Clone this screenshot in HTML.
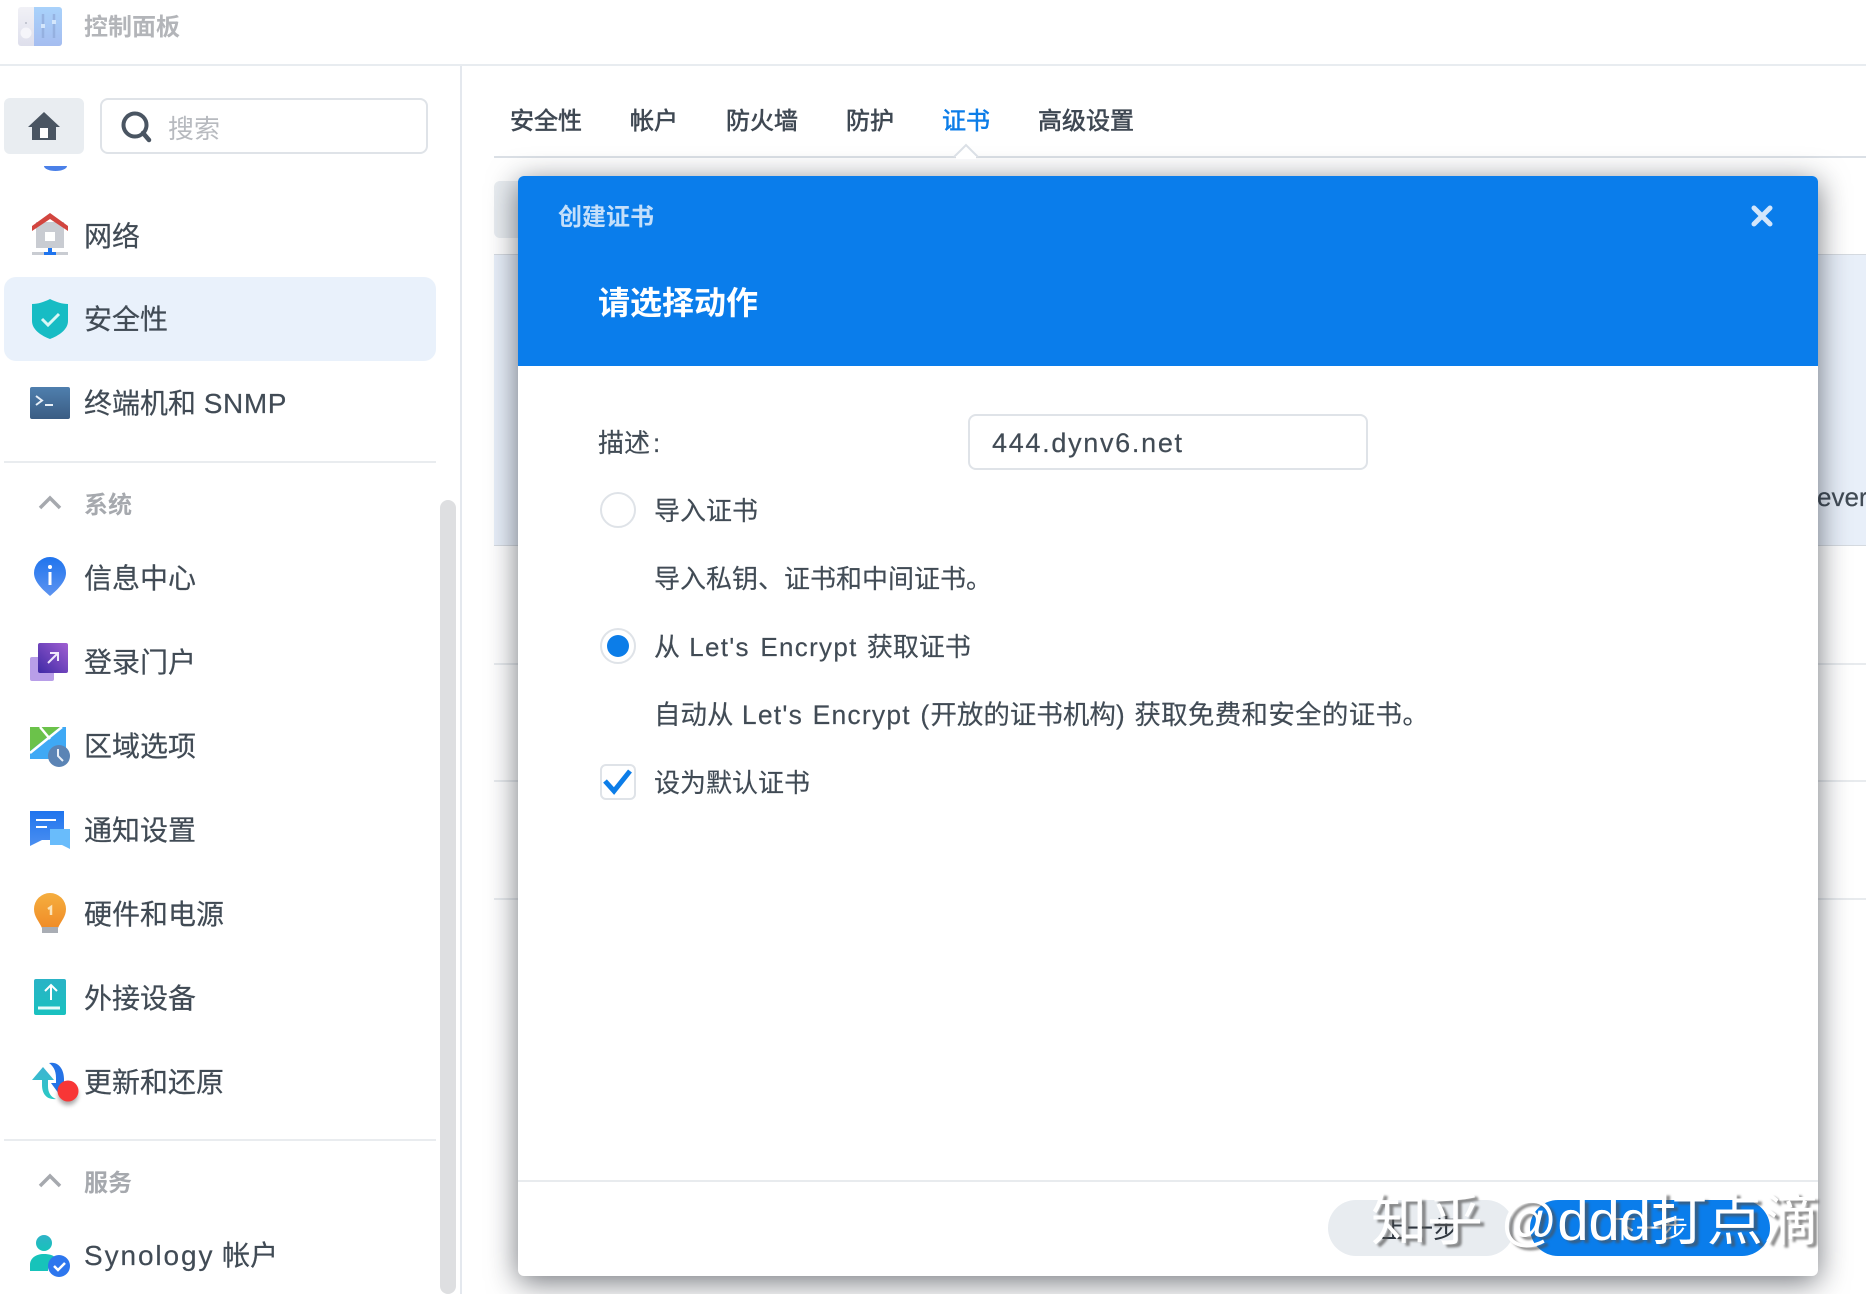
<!DOCTYPE html>
<html lang="zh-CN">
<head>
<meta charset="utf-8">
<title>控制面板</title>
<style>
html,body{margin:0;padding:0;background:#fff;}
body{width:1866px;height:1294px;position:relative;overflow:hidden;font-family:"Liberation Sans","Noto Sans CJK SC",sans-serif;color:#414b55;}
.b{position:absolute;}
.t{position:absolute;white-space:nowrap;height:40px;line-height:40px;}
.nav{font-size:28px;left:84px;color:#414b55;-webkit-text-stroke:.2px #414b55;}
.sec{font-size:24px;left:84px;color:#a6a9ae;font-weight:700;}
.tab{font-size:24px;top:102px;color:#3f4853;-webkit-text-stroke:.6px #3f4853;}
.m{font-size:26px;color:#414b55;-webkit-text-stroke:.15px #414b55;}
.lat{letter-spacing:1.3px;}
</style>
</head>
<body>
<!-- backdrop rows -->
<div class="b" style="left:494px;top:181px;width:60px;height:57px;background:#e9edf1;border-radius:6px;"></div>
<div class="b" style="left:494px;top:254px;width:1372px;height:292px;background:#e8eff9;border-top:1px solid #d5dae0;border-bottom:1px solid #d5dae0;box-sizing:border-box;"></div>
<div class="b" style="left:494px;top:663px;width:1372px;height:2px;background:#e8ebee;"></div>
<div class="b" style="left:494px;top:780px;width:1372px;height:2px;background:#e8ebee;"></div>
<div class="b" style="left:494px;top:898px;width:1372px;height:2px;background:#e8ebee;"></div>
<div class="t" style="left:1817px;top:477px;font-size:26px;-webkit-text-stroke:.2px #414b55;">ever</div>

<!-- top title -->
<div class="b" style="left:0;top:64px;width:1866px;height:2px;background:#e8ecf0;"></div>
<div class="t" style="left:84px;top:8px;font-size:24px;font-weight:700;color:#b3b5b9;">控制面板</div>
<div class="b" style="left:460px;top:66px;width:2px;height:1228px;background:#e4e8ee;"></div>

<!-- tabs -->
<div class="t tab" style="left:510px;">安全性</div>
<div class="t tab" style="left:630px;">帐户</div>
<div class="t tab" style="left:726px;">防火墙</div>
<div class="t tab" style="left:846px;">防护</div>
<div class="t tab" style="left:942px;color:#0c7de8;-webkit-text-stroke:.6px #0c7de8;">证书</div>
<div class="t tab" style="left:1038px;">高级设置</div>
<div class="b" style="left:494px;top:156px;width:1372px;height:2px;background:#dbe0e6;"></div>

<!-- sidebar -->
<div class="b" style="left:4px;top:98px;width:80px;height:56px;background:#e9edf1;border-radius:6px;"></div>
<div class="b" style="left:100px;top:98px;width:328px;height:56px;box-sizing:border-box;border:2px solid #dfe3e8;border-radius:8px;background:#fff;"></div>
<div class="t" style="left:168px;top:109px;font-size:26px;color:#b7babf;">搜索</div>
<div class="b" style="left:4px;top:277px;width:432px;height:84px;background:#e9f1fb;border-radius:12px;"></div>
<div class="b" style="left:4px;top:461px;width:432px;height:2px;background:#e9ecef;"></div>
<div class="b" style="left:4px;top:1139px;width:432px;height:2px;background:#e9ecef;"></div>
<div class="b" style="left:440px;top:500px;width:16px;height:794px;background:#dedfe1;border-radius:8px;"></div>

<div class="t nav" style="top:217px;">网络</div>
<div class="t nav" style="top:300px;">安全性</div>
<div class="t nav" style="top:384px;">终端机和 <span style="letter-spacing:.6px;">SNMP</span></div>
<div class="t sec" style="top:486px;">系统</div>
<div class="t nav" style="top:559px;">信息中心</div>
<div class="t nav" style="top:643px;">登录门户</div>
<div class="t nav" style="top:727px;">区域选项</div>
<div class="t nav" style="top:811px;">通知设置</div>
<div class="t nav" style="top:895px;">硬件和电源</div>
<div class="t nav" style="top:979px;">外接设备</div>
<div class="t nav" style="top:1063px;">更新和还原</div>
<div class="t sec" style="top:1164px;">服务</div>
<div class="t nav" style="top:1236px;"><span style="letter-spacing:1.900px;">Synology</span> 帐户</div>

<!-- icons -->
<svg class="b" style="left:0;top:0;" width="480" height="1294" viewBox="0 0 480 1294" xmlns="http://www.w3.org/2000/svg">
<defs>
<linearGradient id="g1" x1="0" y1="0" x2="0" y2="1"><stop offset="0" stop-color="#a9d2fb"/><stop offset="1" stop-color="#a5bdf0"/></linearGradient>
<linearGradient id="g2" x1="0" y1="0" x2="0" y2="1"><stop offset="0" stop-color="#f1f1f6"/><stop offset="1" stop-color="#dedfec"/></linearGradient>
<linearGradient id="gTerm" x1="0" y1="0" x2="0" y2="1"><stop offset="0" stop-color="#4f7fae"/><stop offset="1" stop-color="#3a5c83"/></linearGradient>
<linearGradient id="gInfo" x1="0" y1="0" x2="0" y2="1"><stop offset="0" stop-color="#1f74ee"/><stop offset="1" stop-color="#5e94f0"/></linearGradient>
<linearGradient id="gPort" x1="1" y1="0" x2="0" y2="1"><stop offset="0" stop-color="#a05fd2"/><stop offset="1" stop-color="#3f2aa6"/></linearGradient>
<linearGradient id="gNote" x1="0" y1="0" x2="0" y2="1"><stop offset="0" stop-color="#1f74ee"/><stop offset="1" stop-color="#4b8ff0"/></linearGradient>
<linearGradient id="gBulb" x1="0" y1="0" x2="0" y2="1"><stop offset="0" stop-color="#f5ae3f"/><stop offset="1" stop-color="#f08c27"/></linearGradient>
<linearGradient id="gExt" x1="0" y1="0" x2="0" y2="1"><stop offset="0" stop-color="#2ab3c6"/><stop offset="1" stop-color="#19c1bf"/></linearGradient>
<linearGradient id="gUp" x1="0" y1="0" x2="0" y2="1"><stop offset="0" stop-color="#3eb4d3"/><stop offset="1" stop-color="#2ac9c4"/></linearGradient>
<linearGradient id="gUser" x1="0" y1="0" x2="0" y2="1"><stop offset="0" stop-color="#2fb2c8"/><stop offset="1" stop-color="#17c3ba"/></linearGradient>
<filter id="blurDot" x="-50%" y="-50%" width="200%" height="200%"><feGaussianBlur stdDeviation="2.5"/></filter>
</defs>
<!-- control panel -->
<rect x="18" y="7" width="44" height="39" rx="3" fill="url(#g2)"/>
<path d="M34 7h25a3 3 0 0 1 3 3v33a3 3 0 0 1-3 3H34z" fill="url(#g1)"/>
<circle cx="26" cy="33" r="5.500" fill="#f5f5fa"/><circle cx="26" cy="23" r="1" fill="#b8bcc8"/>
<path d="M43 14v24M54 14v24" stroke="#8fa9d8" stroke-width="2.500" opacity=".7"/>
<rect x="41" y="24" width="4" height="4" fill="#d4e6fb"/><rect x="52" y="20" width="4" height="4" fill="#d4e6fb"/>
<!-- home -->
<path d="M44 112 L60 127 H56 V140 H32 V127 H28 Z" fill="#4a5562"/><rect x="40" y="128" width="8" height="10" fill="#fff"/>
<!-- search -->
<circle cx="135" cy="125" r="11.500" fill="none" stroke="#4a5562" stroke-width="4"/><path d="M143 133l6 7" stroke="#4a5562" stroke-width="4.500" stroke-linecap="round"/>
<!-- partial -->
<path d="M44 166h23a11.500 5 0 0 1-23 0z" fill="#4a80e8"/>
<!-- network -->
<path d="M36 222h28v26H36z" fill="#c9ccd2"/><rect x="45" y="232" width="10" height="9" fill="#fff"/>
<path d="M32 226 L50 213 L68 226 V231 L50 219 L32 231Z" fill="#d2453f"/>
<rect x="32" y="252" width="36" height="3" fill="#c9ccd2"/><path d="M44 255v-3h4v-4h4v4h4v3z" fill="#1f74ee"/>
<!-- shield -->
<path d="M50 299 C56 302 62 304 68 304 V321 C68 330 58 336 50 339 C42 336 32 330 32 321 V304 C38 304 44 302 50 299Z" fill="#17bcc4"/>
<path d="M42 319l6 6 11-11" stroke="#d9f7f6" stroke-width="3" fill="none"/>
<!-- terminal -->
<rect x="30" y="387" width="40" height="32" rx="2" fill="url(#gTerm)"/>
<path d="M36 396l6 4.500-6 4.500" stroke="#e8f0f8" stroke-width="2" fill="none"/><path d="M45 405h8" stroke="#e8f0f8" stroke-width="2"/>
<!-- chevrons -->
<path d="M40 508l10-10 10 10" stroke="#a6a9ae" stroke-width="3.500" fill="none"/>
<path d="M40 1186l10-10 10 10" stroke="#a6a9ae" stroke-width="3.500" fill="none"/>
<!-- info -->
<path d="M50 557 a16 16 0 0 1 16 16 c0 9 -9 17 -16 23 c-7 -6 -16 -14 -16 -23 a16 16 0 0 1 16 -16z" fill="url(#gInfo)"/>
<circle cx="50" cy="567" r="2" fill="#fff"/><rect x="48.500" y="572" width="3" height="13" fill="#fff"/>
<!-- login portal -->
<rect x="30" y="657" width="24" height="24" rx="2" fill="#b89ee8"/>
<rect x="38" y="643" width="30" height="30" rx="2" fill="url(#gPort)"/>
<path d="M48 663l10-10M50 653h8v8" stroke="#f0e8fb" stroke-width="2" fill="none"/>
<!-- region -->
<path d="M30 727h36v32H30z" fill="#3fa9f5"/><path d="M30 727h30L30 751z" fill="#6bc24a"/>
<path d="M62 727L30 753M40 727l10 12" stroke="#fff" stroke-width="2.500"/>
<circle cx="59" cy="756" r="11" fill="#5b84b5"/><path d="M58 749v7l5 5" stroke="#e8eff8" stroke-width="2" fill="none"/>
<!-- notification -->
<path d="M30 811h34v29H42l-12 6z" fill="url(#gNote)" /><path d="M36 820h20M36 827h11" stroke="#fff" stroke-width="2"/>
<path d="M50 829h20v20l-8-4H50z" fill="#69bcfb"/>
<!-- bulb -->
<path d="M50 893a16 16 0 0 1 16 16c0 8-5 12-8 19H42c-3-7-8-11-8-19a16 16 0 0 1 16-16z" fill="url(#gBulb)"/>
<rect x="42" y="927" width="16" height="6" fill="#a9adb4"/>
<path d="M48 909l3-2v8" stroke="#fbe4b8" stroke-width="2.500" fill="none"/>
<!-- external -->
<rect x="34" y="979" width="32" height="36" rx="2" fill="url(#gExt)"/>
<path d="M51 1000v-15M45 991l6-6 6 6" stroke="#fff" stroke-width="2" fill="none"/><path d="M38 1008h22" stroke="#e6fbfa" stroke-width="3"/>
<!-- update -->
<path d="M32 1080l11-13 11 13h-6v6c0 7 3 11 8 13c-10 1-14-6-14-14v-5z" fill="url(#gUp)"/>
<path d="M49 1063c10-2 15 7 15 16v4h5l-10 11-8-11h5v-5c0-8-3-12-7-15z" fill="#2573e6"/>
<circle cx="68" cy="1095" r="10" fill="#000" opacity=".35" filter="url(#blurDot)"/>
<circle cx="68" cy="1091" r="10.500" fill="#f83636"/>
<!-- synology -->
<circle cx="44" cy="1243" r="8" fill="url(#gUser)"/>
<path d="M30 1271v-6c0-7 6-11 14-11 5 0 9 1 12 4-5 3-8 8-8 13z" fill="#17c3ba"/>
<circle cx="59" cy="1266" r="11" fill="#2d76ee"/>
<path d="M54 1266l4 4 7-7" stroke="#fff" stroke-width="2.500" fill="none"/>
</svg>

<!-- modal -->
<div class="b" style="left:518px;top:176px;width:1300px;height:1100px;background:#fff;border-radius:6px;box-shadow:0 6px 30px rgba(20,25,35,.6);overflow:hidden;">
  <div class="b" style="left:0;top:0;width:1300px;height:190px;background:#0a7deb;"></div>
  <div class="b" style="left:0;top:1004px;width:1300px;height:2px;background:#e8ebee;"></div>
  <div class="b" style="left:810px;top:1024px;width:186px;height:56px;border-radius:28px;background:#e8ecf0;"></div>
  <div class="b" style="left:1012px;top:1024px;width:240px;height:56px;border-radius:28px;background:#0a7deb;"></div>
</div>
<!-- tab notch (above modal shadow) -->
<svg class="b" style="left:950px;top:143px;" width="32" height="16" viewBox="0 0 32 16" xmlns="http://www.w3.org/2000/svg"><path d="M4 14 L16 2 L28 14" fill="#fff" stroke="#dbe0e6" stroke-width="2"/><rect x="6" y="13" width="20" height="3" fill="#fff"/></svg>

<div class="t" style="left:558px;top:198px;font-size:24px;font-weight:700;color:#c4dffa;">创建证书</div>
<div class="t" style="left:598px;top:283px;font-size:32px;font-weight:700;color:#fff;">请选择动作</div>
<svg class="b" style="left:1751px;top:205px;" width="22" height="22" viewBox="0 0 22 22" xmlns="http://www.w3.org/2000/svg"><path d="M3 3l16 16M19 3L3 19" stroke="#d3e6fb" stroke-width="5" stroke-linecap="round"/></svg>

<div class="t m" style="left:598px;top:423px;">描述<span style="margin-left:3px;">:</span></div>
<div class="b" style="left:968px;top:414px;width:400px;height:56px;box-sizing:border-box;border:2px solid #dfe3e8;border-radius:8px;background:#fff;"></div>
<div class="t" style="left:992px;top:423px;font-size:27px;letter-spacing:1.700px;color:#414b55;-webkit-text-stroke:.2px #414b55;">444.dynv6.net</div>

<div class="b" style="left:600px;top:492px;width:36px;height:36px;box-sizing:border-box;border:2px solid #dfe3e8;border-radius:50%;background:#fff;"></div>
<div class="t m" style="left:654px;top:491px;">导入证书</div>
<div class="t m" style="left:654px;top:559px;">导入私钥、证书和中间证书。</div>
<div class="b" style="left:600px;top:628px;width:36px;height:36px;box-sizing:border-box;border:2px solid #dfe3e8;border-radius:50%;background:#fff;"></div>
<div class="b" style="left:607px;top:635px;width:22px;height:22px;border-radius:50%;background:#0c7de8;"></div>
<div class="t m" style="left:654px;top:627px;word-spacing:2px;">从 <span class="lat">Let's Encrypt</span> 获取证书</div>
<div class="t m" style="left:654px;top:695px;font-size:26.500px;word-spacing:1px;">自动从 <span style="letter-spacing:1.200px;">Let's Encrypt (</span>开放的证书机构<span style="letter-spacing:1.200px;">)</span> <span style="letter-spacing:.3px;">获取免费和安全的证书。</span></div>
<div class="b" style="left:600px;top:764px;width:36px;height:36px;box-sizing:border-box;border:2px solid #dfe3e8;border-radius:6px;background:#fff;"></div>
<svg class="b" style="left:600px;top:764px;" width="36" height="36" viewBox="0 0 36 36" xmlns="http://www.w3.org/2000/svg"><path d="M5 17l9 10L30 7" stroke="#0c7de8" stroke-width="5" fill="none"/></svg>
<div class="t m" style="left:654px;top:763px;">设为默认证书</div>

<!-- footer button labels -->
<div class="t" style="left:1381px;top:1209px;font-size:26px;color:#2f3740;">上一步</div>
<div class="t" style="left:1610px;top:1209px;font-size:26px;color:#fff;">下一步</div>

<!-- watermark -->
<div class="t" style="left:1371px;top:1189px;height:64px;line-height:64px;font-size:56px;color:#fff;text-shadow:4px 3px 2px rgba(80,80,80,.65);word-spacing:2px;">知乎 @ddd打点滴</div>
</body>
</html>
